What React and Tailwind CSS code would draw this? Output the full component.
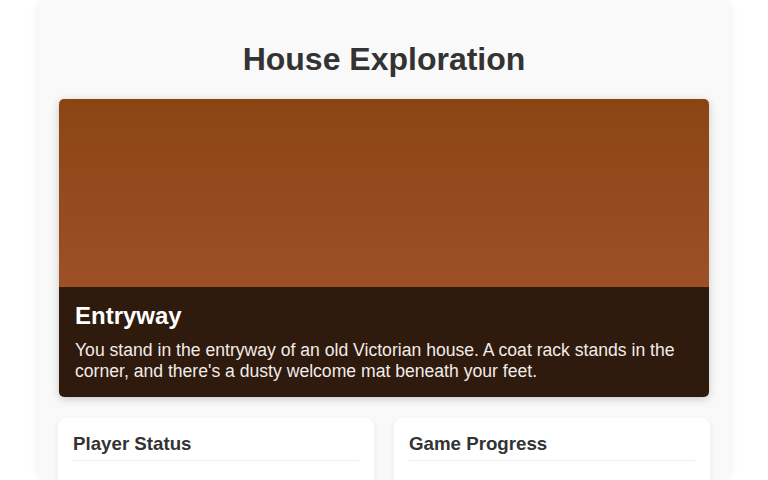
import React from 'react';

const StatusCard = ({ title }) => (
  <div className="min-h-[120px] rounded-lg bg-white p-[15px] shadow-[0_2px_5px_rgba(0,0,0,0.08)]">
    <h3 className="border-b border-[#eeeeee] pb-[5px] text-[18.72px] leading-[22px] font-bold text-[#333333]">
      {title}
    </h3>
  </div>
);

const App = () => {
  return (
    <div
      className="min-h-[480px] bg-white"
      style={{ fontFamily: '"Liberation Sans", Arial, sans-serif' }}
    >
      <div className="mx-auto h-[480px] w-[692px] overflow-hidden rounded-[10px] bg-[#f9f9f9] px-[21px] pt-5 shadow-[0_0_10px_rgba(0,0,0,0.08)]">
        <h1 className="my-[21px] text-center text-[32px] leading-[37px] font-bold text-[#333333]">
          House Exploration
        </h1>

        {/* Scene view */}
        <div className="overflow-hidden rounded-[5px] shadow-[0_2px_8px_rgba(0,0,0,0.2)]">
          <div className="h-[188px] bg-gradient-to-b from-[#8b4513] to-[#9d5026]" />
          <div className="bg-[#2f1a0e] px-4 py-[15px] text-white">
            <h2 className="mb-[10px] text-2xl leading-[28px] font-bold">Entryway</h2>
            <p className="text-[17.6px] leading-[21px] text-[#f2ece8]">
              You stand in the entryway of an old Victorian house. A coat rack stands in the
              corner, and there's a dusty welcome mat beneath your feet.
            </p>
          </div>
        </div>

        <div className="mt-[21px] -mx-px grid grid-cols-2 gap-5">
          <StatusCard title="Player Status" />
          <StatusCard title="Game Progress" />
        </div>
      </div>
    </div>
  );
};

export default App;
